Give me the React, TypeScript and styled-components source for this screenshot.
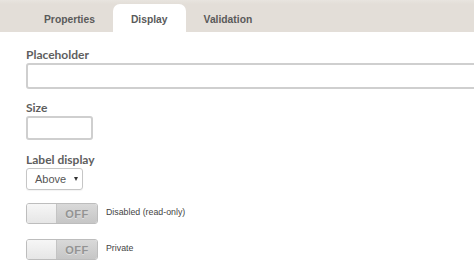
import React from 'react';
import styled, { createGlobalStyle } from 'styled-components';

const GlobalStyle = createGlobalStyle`
  html, body { margin: 0; padding: 0; background: #fff; }
  body { font-family: "Liberation Sans", Arial, sans-serif; overflow: hidden; }
`;

const TabBar = styled.div`
  display: flex;
  height: 32px;
  background: linear-gradient(#e8e4df, #e3ded8 4px);
  padding-left: 26px;
  align-items: flex-end;
`;

const Tab = styled.div<{ active?: boolean }>`
  height: 28px;
  padding: 2px 18px 0;
  display: flex;
  align-items: center;
  justify-content: center;
  font-size: 10.3px;
  font-weight: bold;
  color: #5a5a5a;
  border-radius: 7px 7px 0 0;
  background: ${({ active }) => (active ? '#fff' : 'transparent')};
  box-sizing: border-box;
`;

const Form = styled.div`
  padding: 16px 0 0 26px;
  display: flex;
  flex-direction: column;
`;

const Label = styled.div`
  font-family: Lato, "Liberation Sans", sans-serif;
  font-weight: bold;
  font-size: 12px;
  line-height: 14px;
  color: #5e5e5e;
  margin-bottom: 1px;
`;

const Field = styled.div<{ gap: number }>`
  margin-bottom: ${({ gap }) => gap}px;
`;

const TextInput = styled.div<{ w: string; h: number }>`
  width: ${({ w }) => w};
  height: ${({ h }) => h}px;
  box-sizing: border-box;
  border: 2px solid #cfcfcf;
  border-radius: 3px;
  background: #fff;
`;

const Select = styled.div`
  position: relative;
  width: 57px;
  height: 22px;
  box-sizing: border-box;
  border: 1px solid #c6c6c6;
  border-radius: 3px;
  display: flex;
  align-items: center;
  padding-left: 8px;
  font-size: 11px;
  color: #555;
  box-shadow: 0 1px 1px rgba(0, 0, 0, 0.05);
`;

const Caret = styled.span`
  position: absolute;
  left: 47px;
  top: 8px;
  width: 0;
  height: 0;
  border-left: 2.5px solid transparent;
  border-right: 2.5px solid transparent;
  border-top: 4px solid #333;
`;

const ToggleRow = styled.div<{ gap: number }>`
  display: flex;
  align-items: flex-start;
  gap: 8px;
  margin-bottom: ${({ gap }) => gap}px;
`;

const Toggle = styled.div`
  display: flex;
  width: 72px;
  height: 21px;
  box-sizing: border-box;
  border: 1px solid #bdbdbd;
  border-radius: 3px;
  overflow: hidden;
`;

const Knob = styled.div`
  width: 29px;
  background: linear-gradient(#f6f6f6, #e6e6e6);
  border-right: 1px solid #c4c4c4;
`;

const Off = styled.div`
  flex: 1;
  display: flex;
  align-items: center;
  justify-content: center;
  background: linear-gradient(#d9d9d9, #c6c6c6);
  color: #939393;
  font-size: 11px;
  font-weight: bold;
  letter-spacing: 0.5px;
  text-shadow: 0 1px 0 #e2e2e2;
`;

const ToggleText = styled.div`
  font-size: 8.8px;
  color: #444;
  padding-top: 4px;
`;

export default function App() {
  return (
    <>
      <GlobalStyle />
      <TabBar>
        <Tab>Properties</Tab>
        <Tab active>Display</Tab>
        <Tab>Validation</Tab>
      </TabBar>
      <Form>
        <Field gap={12}>
          <Label>Placeholder</Label>
          <TextInput w="470px" h={26} />
        </Field>
        <Field gap={13}>
          <Label>Size</Label>
          <TextInput w="67px" h={24} />
        </Field>
        <Field gap={13}>
          <Label>Label display</Label>
          <Select>
            Above
            <Caret />
          </Select>
        </Field>
        <ToggleRow gap={15}>
          <Toggle>
            <Knob />
            <Off>OFF</Off>
          </Toggle>
          <ToggleText>Disabled (read-only)</ToggleText>
        </ToggleRow>
        <ToggleRow gap={0}>
          <Toggle>
            <Knob />
            <Off>OFF</Off>
          </Toggle>
          <ToggleText>Private</ToggleText>
        </ToggleRow>
      </Form>
    </>
  );
}
